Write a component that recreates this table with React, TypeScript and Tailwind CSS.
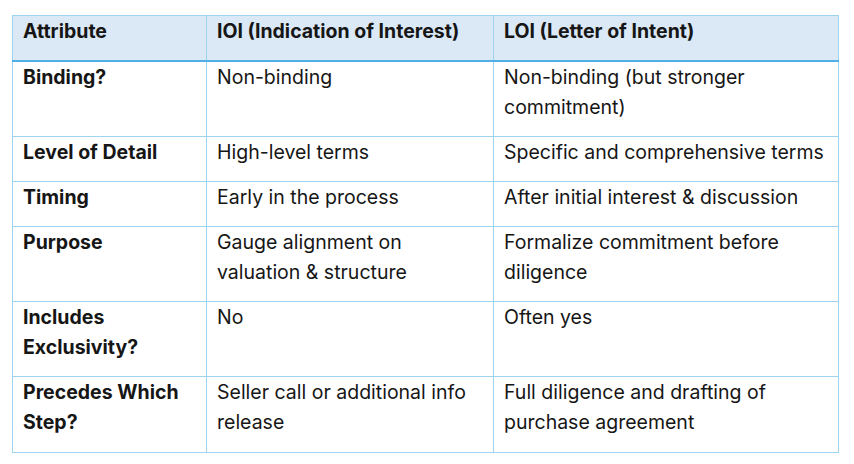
const rows: { attr: string[]; ioi: string[]; loi: string[]; h: string }[] = [
  { attr: ["Binding?"], ioi: ["Non-binding"], loi: ["Non-binding (but stronger", "commitment)"], h: "h-[76px]" },
  { attr: ["Level of Detail"], ioi: ["High-level terms"], loi: ["Specific and comprehensive terms"], h: "h-[45px]" },
  { attr: ["Timing"], ioi: ["Early in the process"], loi: ["After initial interest & discussion"], h: "h-[45px]" },
  { attr: ["Purpose"], ioi: ["Gauge alignment on", "valuation & structure"], loi: ["Formalize commitment before", "diligence"], h: "h-[75px]" },
  { attr: ["Includes", "Exclusivity?"], ioi: ["No"], loi: ["Often yes"], h: "h-[75px]" },
  { attr: ["Precedes Which", "Step?"], ioi: ["Seller call or additional info", "release"], loi: ["Full diligence and drafting of", "purchase agreement"], h: "h-[76px]" },
];

function Lines({ lines }: { lines: string[] }) {
  return (
    <>
      {lines.map((l, i) => (
        <div key={i} className="whitespace-nowrap">{l}</div>
      ))}
    </>
  );
}

export default function App() {
  return (
    <div className="w-[854px] h-[464px] bg-white pt-[15px] pl-[12px] font-['Inter','Noto_Sans',sans-serif] text-[19.5px] leading-[30px] text-[#161616]">
      <table className="border-collapse table-fixed w-[826px]">
        <colgroup>
          <col className="w-[194px]" />
          <col className="w-[287px]" />
          <col className="w-[345px]" />
        </colgroup>
        <thead>
          <tr className="h-[45px] bg-[#dbe9f7]">
            <th className="border border-[#9fd4f1] border-b-2 border-b-[#52afe6] align-top text-left font-bold pl-[10px] pt-0">Attribute</th>
            <th className="border border-[#9fd4f1] border-b-2 border-b-[#52afe6] align-top text-left font-bold pl-[10px] pt-0">IOI (Indication of Interest)</th>
            <th className="border border-[#9fd4f1] border-b-2 border-b-[#52afe6] align-top text-left font-bold pl-[10px] pt-0">LOI (Letter of Intent)</th>
          </tr>
        </thead>
        <tbody>
          {rows.map((r, i) => (
            <tr key={i} className={r.h}>
              <td className="border border-[#9fd4f1] align-top pl-[10px] pt-0 font-bold">
                <Lines lines={r.attr} />
              </td>
              <td className="border border-[#9fd4f1] align-top pl-[10px] pt-0">
                <Lines lines={r.ioi} />
              </td>
              <td className="border border-[#9fd4f1] align-top pl-[10px] pt-0">
                <Lines lines={r.loi} />
              </td>
            </tr>
          ))}
        </tbody>
      </table>
    </div>
  );
}
